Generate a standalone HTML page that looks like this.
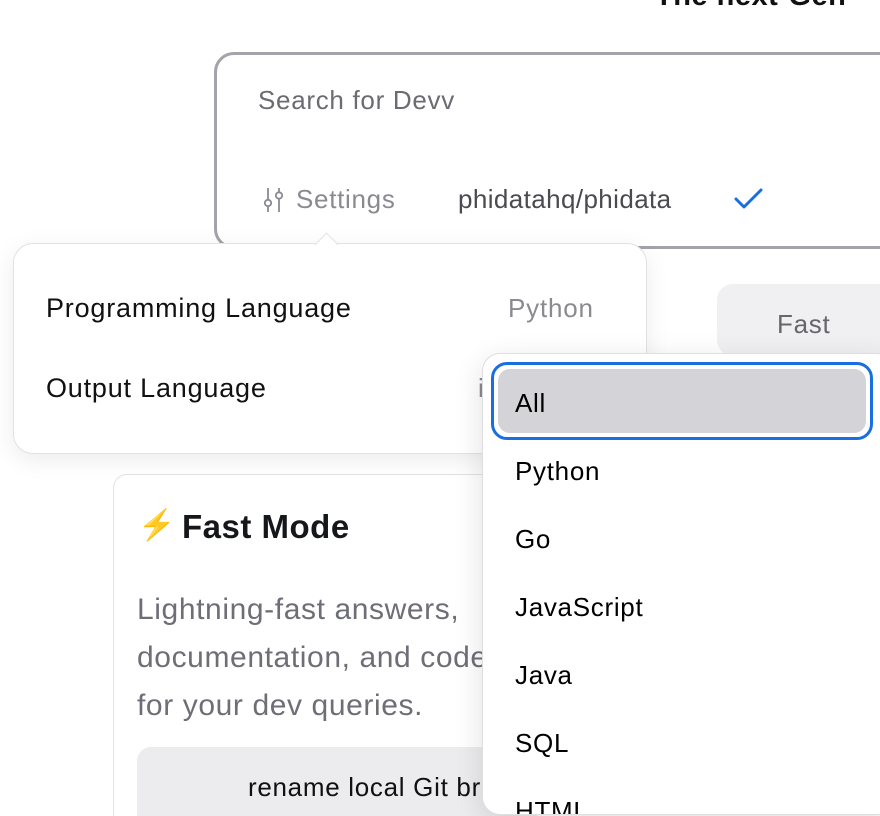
<!DOCTYPE html>
<html><head><meta charset="utf-8"><style>
html,body{margin:0;width:880px;height:816px;overflow:hidden}
body{background:#fff;font-family:"Liberation Sans",sans-serif}
#w{position:relative;width:880px;height:816px;overflow:hidden}
.abs{position:absolute;white-space:nowrap}
.t{font-size:26px;letter-spacing:0.7px}
</style></head><body><div id="w">
<div class="abs" style="left:655px;top:-20px;font-size:29px;font-weight:bold;color:#111;letter-spacing:0.5px">The next-Gen</div>
<div class="abs" style="left:214px;top:52px;width:700px;height:191px;border:3px solid #a3a3a9;border-radius:20px;background:#fff"></div>
<div class="abs t" style="left:258px;top:85px;color:#6b6b72">Search for Devv</div>
<svg class="abs" style="left:262px;top:186px" width="26" height="28" viewBox="0 0 26 28" fill="none" stroke="#8a8a90" stroke-width="1.8"><line x1="6" y1="2" x2="6" y2="13"/><circle cx="6" cy="17" r="3.2"/><line x1="6" y1="20" x2="6" y2="26"/><line x1="17" y1="2" x2="17" y2="6"/><circle cx="17" cy="9.5" r="3.2"/><line x1="17" y1="13" x2="17" y2="26"/></svg>
<div class="abs t" style="left:296px;top:184px;color:#8a8a90">Settings</div>
<div class="abs t" style="left:458px;top:184px;color:#4a4a50;letter-spacing:0.4px">phidatahq/phidata</div>
<svg class="abs" style="left:733px;top:187px" width="32" height="24" viewBox="0 0 32 24" fill="none" stroke="#1a6fe0" stroke-width="3" stroke-linecap="round" stroke-linejoin="round"><path d="M3 12 L11 20 L28 3"/></svg>
<div class="abs" style="left:717px;top:284px;width:200px;height:72px;background:#f0f0f2;border-radius:16px"></div>
<div class="abs t" style="left:777px;top:309px;color:#66666c">Fast</div>
<div class="abs" style="left:113px;top:474px;width:420px;height:400px;border:1px solid #e3e3e6;border-radius:14px;background:#fff"></div>
<div class="abs" style="left:138px;top:508px;font-size:30px;color:#f0a020">⚡</div>
<div class="abs" style="left:182px;top:508px;font-size:33px;font-weight:bold;color:#15171a;letter-spacing:0.5px">Fast Mode</div>
<div class="abs" style="left:137px;top:586px;font-size:30px;line-height:48px;color:#6e6e76;letter-spacing:0.6px">Lightning-fast answers,<br>documentation, and code<br>for your dev queries.</div>
<div class="abs" style="left:137px;top:747px;width:400px;height:90px;background:#ececee;border-radius:14px"></div>
<div class="abs t" style="left:248px;top:772px;color:#111">rename local Git branch</div>
<div class="abs" style="left:13px;top:243px;width:632px;height:209px;background:#fff;border:1px solid #e2e2e4;border-radius:20px;box-shadow:0 6px 24px rgba(0,0,0,0.08)"></div>
<div class="abs" style="left:318px;top:236px;width:16px;height:16px;background:#fff;border-left:1px solid #e2e2e4;border-top:1px solid #e2e2e4;transform:rotate(45deg)"></div>
<div class="abs" style="left:46px;top:293px;font-size:27px;letter-spacing:0.8px;color:#111">Programming Language</div>
<div class="abs" style="left:508px;top:293px;font-size:26px;letter-spacing:0.8px;color:#8a8a90">Python</div>
<div class="abs" style="left:46px;top:373px;font-size:27px;letter-spacing:0.8px;color:#111">Output Language</div>
<div class="abs t" style="left:478px;top:373px;color:#8a8a90">i</div>
<div class="abs" style="left:482px;top:353px;width:410px;height:460px;background:#fff;border:1px solid #dedee0;border-radius:18px;box-shadow:0 8px 30px rgba(0,0,0,0.12);overflow:hidden">
<div class="abs" style="left:8px;top:8px;width:376px;height:72px;border:3px solid #1a6fe0;border-radius:16px"></div>
<div class="abs" style="left:15px;top:15px;width:368px;height:64px;background:#d4d4d8;border-radius:12px"></div>
<div class="abs" style="left:32px;top:34px;font-size:26px;letter-spacing:0.7px;color:#000;line-height:30px">All<br><span style="display:block;margin-top:38px">Python</span><span style="display:block;margin-top:38px">Go</span><span style="display:block;margin-top:38px">JavaScript</span><span style="display:block;margin-top:38px">Java</span><span style="display:block;margin-top:38px">SQL</span><span style="display:block;margin-top:38px">HTML</span></div>
</div>
</div></body></html>
